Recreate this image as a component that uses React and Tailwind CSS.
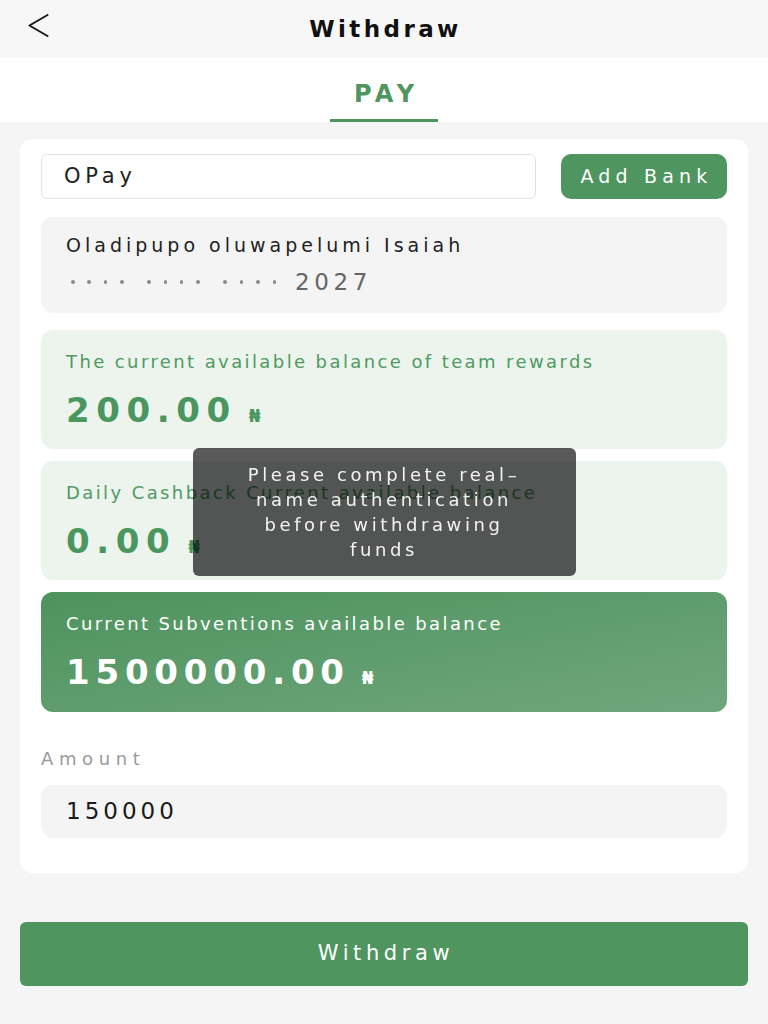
import React from "react";

const font = { fontFamily: '"DejaVu Sans", "Liberation Sans", sans-serif' };

const Dots = () => (
  <div className="flex items-center gap-[12.9px]">
    <span className="w-[3.5px] h-[3.5px] rounded-full bg-[#8a8a8a]"></span>
    <span className="w-[3.5px] h-[3.5px] rounded-full bg-[#8a8a8a]"></span>
    <span className="w-[3.5px] h-[3.5px] rounded-full bg-[#8a8a8a]"></span>
    <span className="w-[3.5px] h-[3.5px] rounded-full bg-[#8a8a8a]"></span>
  </div>
);

const BalanceCard = ({ label, amount, amountTracking, dark, tall }) => (
  <div
    className={`${tall ? "h-[120px]" : "h-[119px]"} rounded-[12px] px-[25px] pt-[21px] ${
      dark ? "bg-linear-to-br from-[#4d935e] to-[#70a67c]" : "bg-[#ecf4ed]"
    }`}
  >
    <div
      className={`text-[18px] leading-[22px] tracking-[2.4px] whitespace-nowrap ${
        dark ? "text-white" : "text-[#4f9a62]"
      }`}
    >
      {label}
    </div>
    <div className="mt-[17px] flex items-baseline">
      <span
        className={`text-[34px] leading-[40px] font-bold ${amountTracking} ${
          dark ? "text-white" : "text-[#4a965f]"
        }`}
      >
        {amount}
      </span>
      <span
        className={`ml-[12px] text-[17px] font-bold ${
          dark ? "text-white" : "text-[#4a965f]"
        }`}
      >
        ₦
      </span>
    </div>
  </div>
);

export default function App() {
  return (
    <div className="min-h-screen bg-[#f5f5f5]" style={font}>
      {/* header */}
      <div className="relative h-[58px] bg-[#f7f7f7] flex items-center justify-center">
        <svg
          className="absolute left-[28px] top-[14px]"
          width="21"
          height="23"
          viewBox="0 0 21 23"
          fill="none"
        >
          <polyline
            points="19.5,1 1.5,11.5 19.5,22"
            stroke="#1a1a1a"
            strokeWidth="2"
            strokeLinecap="round"
            strokeLinejoin="round"
          />
        </svg>
        <h1 className="text-[23px] font-bold leading-[30px] tracking-[3.4px] text-[#111] pl-[3px]">
          Withdraw
        </h1>
      </div>

      {/* tabs */}
      <div className="h-[64px] bg-white flex flex-col items-center pt-[21px]">
        <div className="text-[24px] font-bold leading-[30px] tracking-[5.5px] pl-[5.5px] text-[#4e955e]">
          PAY
        </div>
        <div className="mt-[10px] w-[108px] h-[3px] bg-[#4e955e]"></div>
      </div>

      <div className="px-[20px] pt-[17px] pb-[38px]">
        <div className="bg-white rounded-[12px] px-[21px] pt-[15px] pb-[35px]">
          {/* bank row */}
          <div className="flex gap-[25px]">
            <div className="w-[495px] h-[45px] border border-[#e3e3e3] rounded-[6px] flex items-center px-[22px] text-[21px] tracking-[4.8px] text-[#222]">
              OPay
            </div>
            <button className="flex-1 h-[45px] rounded-[10px] bg-[#4f9560] text-white text-[19px] tracking-[5.2px] pl-[5px]">
              Add Bank
            </button>
          </div>

          {/* account */}
          <div className="mt-[18px] h-[96px] rounded-[12px] bg-[#f4f4f4] px-[25px] pt-[16px]">
            <div className="text-[19px] leading-[24px] tracking-[4px] text-[#222] whitespace-nowrap">
              Oladipupo oluwapelumi Isaiah
            </div>
            <div className="mt-[11px] h-[28px] flex items-center">
              <div className="ml-[5px] flex items-center gap-[23.5px]">
                <Dots />
                <Dots />
                <Dots />
              </div>
              <span className="ml-[19px] text-[23px] leading-[28px] tracking-[4.6px] text-[#666]">
                2027
              </span>
            </div>
          </div>

          <div className="mt-[17px] flex flex-col gap-[12px]">
            <BalanceCard
              label="The current available balance of team rewards"
              amount="200.00"
              amountTracking="tracking-[6.6px]"
            />
            <BalanceCard
              label="Daily Cashback Current available balance"
              amount="0.00"
              amountTracking="tracking-[6.6px]"
            />
            <BalanceCard
              label="Current Subventions available balance"
              amount="1500000.00"
              amountTracking="tracking-[5.8px]"
              dark
              tall
            />
          </div>

          <div className="mt-[35px] text-[18px] leading-[24px] tracking-[5.6px] text-[#9a9a9a]">
            Amount
          </div>
          <div className="mt-[14px] h-[53px] rounded-[12px] bg-[#f4f4f4] flex items-center px-[25px] text-[23px] tracking-[4px] text-[#1a1a1a]">
            150000
          </div>
        </div>

        <button className="mt-[49px] w-full h-[64px] rounded-[6px] bg-[#4f9560] text-white text-[21px] tracking-[4.6px] pl-[4px]">
          Withdraw
        </button>
      </div>

      {/* toast */}
      <div className="fixed inset-0 flex items-center justify-center pointer-events-none">
        <div className="w-[383px] h-[128px] rounded-[6px] bg-black/65 flex flex-col items-center justify-center text-[18px] leading-[25px] tracking-[3.6px] text-[#f2f2f2] text-center">
          <span>Please complete real–</span>
          <span>name authentication</span>
          <span>before withdrawing</span>
          <span>funds</span>
        </div>
      </div>
    </div>
  );
}
